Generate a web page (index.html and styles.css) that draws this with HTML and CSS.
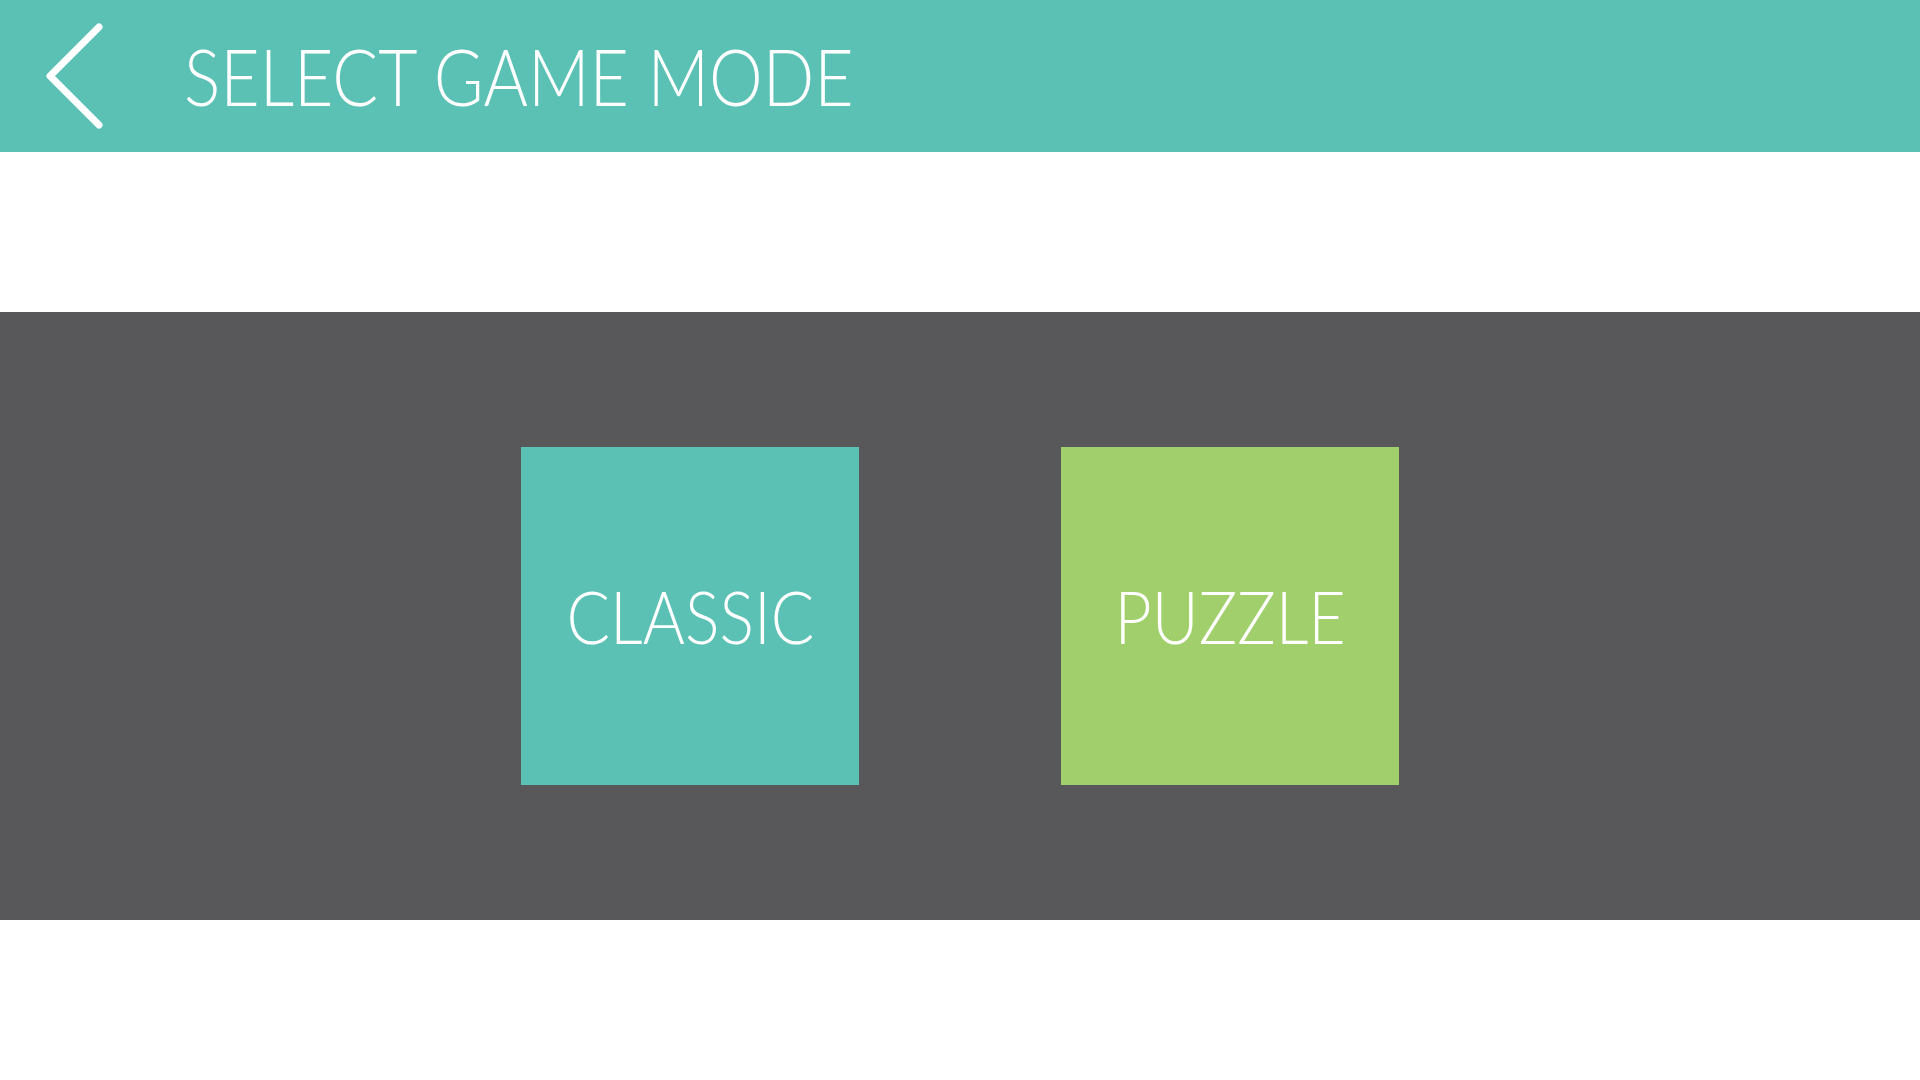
FILE: index.html
```html
<!DOCTYPE html>
<html lang="en">
<head>
    <meta charset="UTF-8">
    <meta name="viewport" content="width=device-width, initial-scale=1.0">
    <title>Select Game Mode</title>
    <link rel="stylesheet" href="styles.css">
</head>
<body>
    <div id="header">
        <a id="back-button" href="#">
            <svg width="70" height="120" viewBox="0 0 70 120">
                <polyline points="59,11 10,60 59,109" fill="none" stroke="white" stroke-width="7" stroke-linecap="round" stroke-linejoin="round"/>
            </svg>
        </a>
        <h1 id="title"><span>SELECT GAME MODE</span></h1>
    </div>
    <div id="spacer"></div>
    <div id="modes">
        <button class="mode classic"><span>CLASSIC</span></button>
        <button class="mode puzzle"><span>PUZZLE</span></button>
    </div>
</body>
</html>
```
FILE: styles.css
```css
body {
    margin: 0;
    background-color: white;
    font-family: 'Lato', 'Noto Sans', sans-serif;
}
#header {
    height: 152px;
    background-color: #5bc1b5;
    display: flex;
    align-items: center;
}
#back-button {
    display: block;
    margin-left: 40px;
    height: 120px;
}
#title {
    margin: 0 0 0 74px;
    font-size: 78px;
    font-weight: 300;
    color: white;
    line-height: 1;
    white-space: nowrap;
}
#title span {
    display: inline-block;
    transform: scaleX(0.87);
    transform-origin: left center;
}
#spacer {
    height: 160px;
}
#modes {
    height: 608px;
    background-color: #58585a;
    display: flex;
    justify-content: center;
    align-items: center;
    gap: 202px;
}
.mode {
    width: 338px;
    height: 338px;
    border: none;
    padding: 0;
    color: white;
    font-family: 'Lato', 'Noto Sans', sans-serif;
    font-size: 72px;
    font-weight: 300;
    cursor: pointer;
}
.mode span {
    display: inline-block;
    transform: scaleX(0.895);
}
.classic {
    background-color: #5bc1b5;
}
.puzzle {
    background-color: #a1cf6b;
}
```
